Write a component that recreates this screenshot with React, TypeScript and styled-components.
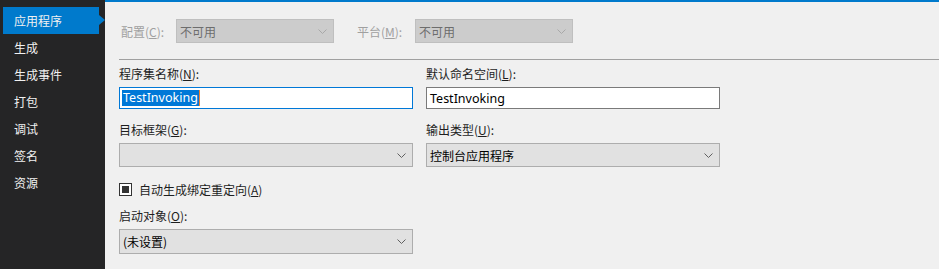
import React from "react";
import styled, { createGlobalStyle } from "styled-components";

const Global = createGlobalStyle`
  html, body { margin: 0; padding: 0; background: #f0f0f0; }
  body {
    font-family: "Noto Sans", "Noto Sans CJK SC", sans-serif;
    font-size: 12px;
    color: #1e1e1e;
  }
  * { box-sizing: border-box; }
`;

const Frame = styled.div`
  display: flex;
  width: 939px;
  height: 269px;
  overflow: hidden;
`;

const Sidebar = styled.nav`
  width: 105px;
  flex: none;
  background: #252526;
  padding: 7px 0 0 3px;
  display: flex;
  flex-direction: column;
`;

const NavItem = styled.div<{ $active?: boolean }>`
  position: relative;
  width: 96px;
  height: 27px;
  padding-left: 11px;
  display: flex;
  align-items: center;
  color: #f1f1f1;
  font-family: "Noto Sans CJK SC", sans-serif;
  font-size: 12px;
  background: ${(p) => (p.$active ? "#007acc" : "transparent")};
  &::after {
    content: "";
    display: ${(p) => (p.$active ? "block" : "none")};
    position: absolute;
    right: -6px;
    top: 8px;
    border-left: 6px solid #007acc;
    border-top: 5px solid transparent;
    border-bottom: 5px solid transparent;
  }
`;

const Main = styled.main`
  flex: 1;
  border-top: 2px solid #007acc;
  padding: 17px 0 0 14px;
  display: flex;
  flex-direction: column;
`;

const Header = styled.div`
  display: flex;
  align-items: center;
  padding-left: 2px;
  height: 24px;
`;

const HeaderLabel = styled.span<{ $w: number; $ml?: number }>`
  width: ${(p) => p.$w}px;
  margin-left: ${(p) => p.$ml ?? 0}px;
  color: #a0a0a0;
  font-family: "Noto Sans CJK SC", sans-serif;
`;

const Separator = styled.div`
  height: 1px;
  background: #a0a0a0;
  margin-top: 16px;
`;

const Form = styled.div`
  display: grid;
  grid-template-columns: 294px 294px;
  column-gap: 13px;
  padding-top: 6px;
`;

const Field = styled.div<{ $mt?: number }>`
  display: flex;
  flex-direction: column;
  margin-top: ${(p) => p.$mt ?? 0}px;
`;

const Label = styled.div`
  height: 16px;
  line-height: 16px;
  margin-bottom: 5px;
  font-family: "Noto Sans CJK SC", sans-serif;
  color: #1e1e1e;
`;

const TextBox = styled.div<{ $focused?: boolean }>`
  height: 22px;
  background: #ffffff;
  border: 1px solid ${(p) => (p.$focused ? "#0078d7" : "#7a7a7a")};
  display: flex;
  align-items: center;
  padding-left: 2px;
  font-family: "Noto Sans", sans-serif;
  font-size: 12.5px;
  color: #000;
`;

const Selected = styled.span`
  background: #0078d7;
  color: #fff;
  padding: 0 1px;
  line-height: 16px;
  border-right: 1px solid #f08030;
`;

const Plain = styled.span`
  padding-left: 1px;
`;

const Combo = styled.div<{ $disabled?: boolean; $w?: number; $h?: number }>`
  ${(p) => (p.$w ? `width: ${p.$w}px;` : "")}
  height: ${(p) => p.$h ?? 24}px;
  background: ${(p) => (p.$disabled ? "#cccccc" : "#e1e1e1")};
  border: 1px solid ${(p) => (p.$disabled ? "#bfbfbf" : "#adadad")};
  color: ${(p) => (p.$disabled ? "#6d6d6d" : "#000")};
  display: flex;
  align-items: center;
  justify-content: space-between;
  padding: 0 6px 0 3px;
  font-family: "Noto Sans CJK SC", sans-serif;
  font-size: 12px;
`;

const Chevron = ({ color }: { color: string }) => (
  <svg width="9" height="5" viewBox="0 0 9 5" style={{ display: "block" }}>
    <path d="M0.5 0.5 L4.5 4.5 L8.5 0.5" fill="none" stroke={color} strokeWidth="1" />
  </svg>
);

const CheckRow = styled.div`
  grid-column: 1 / span 2;
  display: flex;
  align-items: center;
  gap: 7px;
  height: 16px;
  margin-top: 14px;
  font-family: "Noto Sans CJK SC", sans-serif;
`;

const Box = styled.span`
  width: 13px;
  height: 13px;
  border: 1px solid #333;
  background: #fff;
  display: flex;
  align-items: center;
  justify-content: center;
  &::before {
    content: "";
    width: 7px;
    height: 7px;
    background: #333;
  }
`;

const navItems = ["应用程序", "生成", "生成事件", "打包", "调试", "签名", "资源"];

export default function App() {
  return (
    <>
      <Global />
      <Frame>
        <Sidebar>
          {navItems.map((n, i) => (
            <NavItem key={n} $active={i === 0}>
              {n}
            </NavItem>
          ))}
        </Sidebar>
        <Main>
          <Header>
            <HeaderLabel $w={55}>
              配置(<u>C</u>):
            </HeaderLabel>
            <Combo $disabled $w={158}>
              <span>不可用</span>
              <Chevron color="#a8a8a8" />
            </Combo>
            <HeaderLabel $w={58} $ml={23}>
              平台(<u>M</u>):
            </HeaderLabel>
            <Combo $disabled $w={158}>
              <span>不可用</span>
              <Chevron color="#a8a8a8" />
            </Combo>
          </Header>
          <Separator />
          <Form>
            <Field>
              <Label>
                程序集名称(<u>N</u>):
              </Label>
              <TextBox $focused>
                <Selected>TestInvoking</Selected>
              </TextBox>
            </Field>
            <Field>
              <Label>
                默认命名空间(<u>L</u>):
              </Label>
              <TextBox>
                <Plain>TestInvoking</Plain>
              </TextBox>
            </Field>
            <Field $mt={13}>
              <Label>
                目标框架(<u>G</u>):
              </Label>
              <Combo>
                <span />
                <Chevron color="#606060" />
              </Combo>
            </Field>
            <Field $mt={13}>
              <Label>
                输出类型(<u>U</u>):
              </Label>
              <Combo>
                <span>控制台应用程序</span>
                <Chevron color="#606060" />
              </Combo>
            </Field>
            <CheckRow>
              <Box />
              <span>
                自动生成绑定重定向(<u>A</u>)
              </span>
            </CheckRow>
            <Field $mt={11}>
              <Label>
                启动对象(<u>O</u>):
              </Label>
              <Combo $h={25}>
                <span>(未设置)</span>
                <Chevron color="#606060" />
              </Combo>
            </Field>
          </Form>
        </Main>
      </Frame>
    </>
  );
}
